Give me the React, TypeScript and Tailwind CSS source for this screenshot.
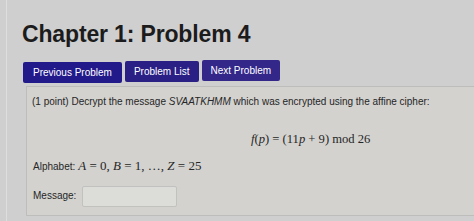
import React from "react";

export default function App() {
  return (
    <div className="w-[474px] h-[221px] overflow-hidden bg-[#cfcfd0] relative" style={{ fontFamily: '"Liberation Sans", Arial, sans-serif' }}>
      <div className="absolute left-[6px] top-0 bottom-0 w-px bg-[#dedede]" />
      <div className="pl-[22px] pt-[23px]">
        <h1 className="text-[23px] font-bold leading-none text-[#1c1c1c] tracking-[-0.15px]">Chapter 1: Problem 4</h1>
        <div className="flex gap-[3px] mt-[16px] pl-[1px]">
          <button className="h-[21px] px-[10px] bg-[#22198a] text-white text-[10px] rounded-[2px] leading-none">Previous Problem</button>
          <button className="h-[21px] px-[9px] bg-[#2a1f85] text-white text-[10px] rounded-[2px] leading-none -mt-[1px]">Problem List</button>
          <button className="h-[21px] px-[9px] bg-[#33278a] text-white text-[10px] rounded-[2px] leading-none -mt-[2px]">Next Problem</button>
        </div>
        <div className="mt-[3px] ml-[4px] w-[460px] h-[130px] border border-[#bdbdbb] bg-[#d3d2cf] pl-[5px] pt-[9px] text-[#262626] text-[10px]">
          <p className="leading-[12px]">
            (1 point) Decrypt the message <i>SVAATKHMM</i> which was encrypted using the affine cipher:
          </p>
          <div className="mt-[25px] pl-[219px] text-[12.6px] leading-none" style={{ fontFamily: '"Liberation Serif", "Times New Roman", serif' }}>
            <i>f</i>(<i>p</i>) = (11<i>p</i> + 9) mod 26
          </div>
          <div className="mt-[14px] pl-[1px] leading-[12px] flex items-baseline gap-[3px]">
            <span>Alphabet:</span>
            <span className="text-[13px]" style={{ fontFamily: '"Liberation Serif", "Times New Roman", serif' }}>
              <i>A</i> = 0, <i>B</i> = 1, …, <i>Z</i> = 25
            </span>
          </div>
          <div className="mt-[13px] pl-[1px] flex items-center gap-[6px]">
            <span className="leading-none">Message:</span>
            <div className="w-[95px] h-[21px] bg-[#dcdcd9] border border-[#c1c1bf] rounded-[2px]" />
          </div>
        </div>
      </div>
    </div>
  );
}
